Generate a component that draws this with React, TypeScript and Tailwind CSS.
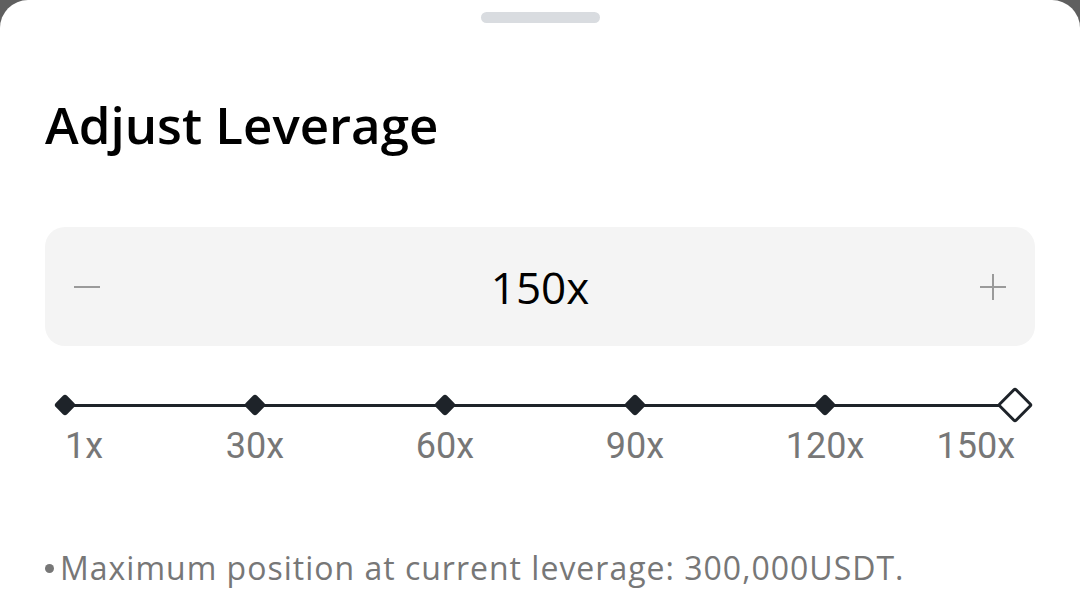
import React from 'react';

const marks = ['1x', '30x', '60x', '90x', '120x', '150x'];

const App: React.FC = () => {
  return (
    <div className="h-[607px] w-[1080px] overflow-hidden bg-[#5f5f5f]">
      <div className="flex h-full flex-col rounded-t-[28px] bg-white px-[45px] font-['Open_Sans',sans-serif]">
        <div className="flex justify-center pt-[12px]">
          <div className="h-[11px] w-[119px] rounded-full bg-[#d9dce0]" />
        </div>

        <h1 className="mt-[71px] text-[51px] font-semibold leading-[60px] text-black">
          Adjust Leverage
        </h1>

        <div className="mt-[73px] flex h-[119px] items-center justify-between rounded-[20px] bg-[#f4f4f4] px-[28px]">
          <svg width="28" height="28" viewBox="0 0 28 28" className="text-[#9a9a9a]">
            <path d="M1 14h26" stroke="currentColor" strokeWidth="2" />
          </svg>
          <span className="text-[44px] font-normal text-black">150x</span>
          <svg width="28" height="28" viewBox="0 0 28 28" className="text-[#9a9a9a]">
            <path d="M1 14h26M14 1v26" stroke="currentColor" strokeWidth="2" />
          </svg>
        </div>

        <div className="relative mx-[20px] mt-[40px] h-[38px]">
          <div className="absolute inset-x-0 top-[18px] h-[3px] bg-[#1e2329]" />
          <div className="relative flex h-full items-center justify-between">
            {marks.map((m, i) => (
              <div key={m} className="flex w-0 justify-center">
                {i === marks.length - 1 ? (
                  <div className="h-[26px] w-[26px] shrink-0 rotate-45 rounded-[3px] border-[3px] border-[#1e2329] bg-white" />
                ) : (
                  <div className="h-[16px] w-[16px] shrink-0 rotate-45 rounded-[3px] bg-[#1e2329]" />
                )}
              </div>
            ))}
          </div>
        </div>

        <div className="mx-[20px] -mt-[1px] flex justify-between font-['Roboto',sans-serif] text-[36px] leading-[46px] text-[#777]">
          {marks.map((m, i) => (
            <div
              key={m}
              className={
                i === 0
                  ? 'flex w-0 justify-start'
                  : i === marks.length - 1
                  ? 'flex w-0 justify-end'
                  : 'flex w-0 justify-center'
              }
            >
              <span className="shrink-0">{m}</span>
            </div>
          ))}
        </div>

        <p className="mt-[79px] flex items-center text-[32px] leading-[40px] tracking-[1px] text-[#777]">
          <span className="mr-[6px] inline-block h-[9px] w-[9px] rounded-full bg-[#777]" />
          Maximum position at current leverage: 300,000USDT.
        </p>
      </div>
    </div>
  );
};

export default App;
